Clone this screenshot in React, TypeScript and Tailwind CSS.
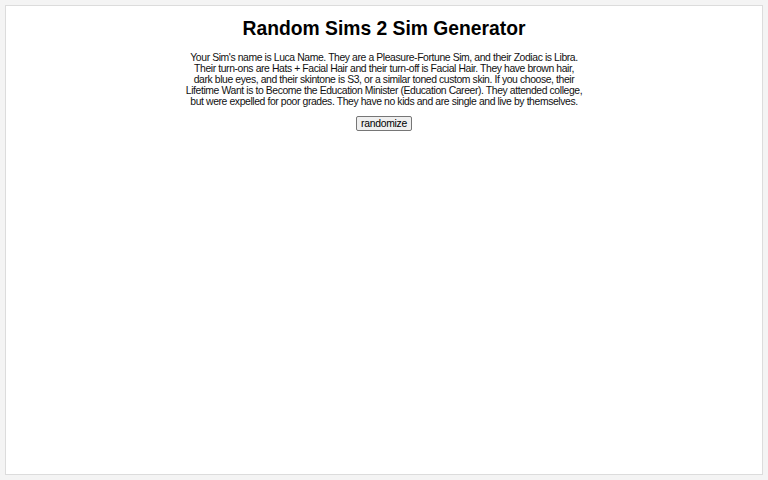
const lines = [
  "Your Sim's name is Luca Name. They are a Pleasure-Fortune Sim, and their Zodiac is Libra.",
  "Their turn-ons are Hats + Facial Hair and their turn-off is Facial Hair. They have brown hair,",
  "dark blue eyes, and their skintone is S3, or a similar toned custom skin. If you choose, their",
  "Lifetime Want is to Become the Education Minister (Education Career). They attended college,",
  "but were expelled for poor grades. They have no kids and are single and live by themselves.",
];

export default function App() {
  return (
    <div className="h-[480px] w-full bg-[#f4f4f4] p-[5px] font-['Liberation_Sans',Arial,sans-serif] text-black">
      <div className="flex h-full flex-col items-center border border-[#dcdcdc] bg-white pt-[10px]">
        <h1 className="text-[19.3px] font-bold leading-[25px]">Random Sims 2 Sim Generator</h1>
        <p className="mt-[11px] whitespace-nowrap text-center text-[10.4px] leading-[11px] tracking-[-0.4px] text-[#111]">
          {lines.map((line) => (
            <span key={line} className="block">
              {line}
            </span>
          ))}
        </p>
        <button className="mt-[9px] h-[15px] rounded-[2px] border border-[#767676] bg-[#efefef] px-[4px] text-[10.4px] leading-[13px] tracking-[-0.3px]">
          randomize
        </button>
      </div>
    </div>
  );
}
